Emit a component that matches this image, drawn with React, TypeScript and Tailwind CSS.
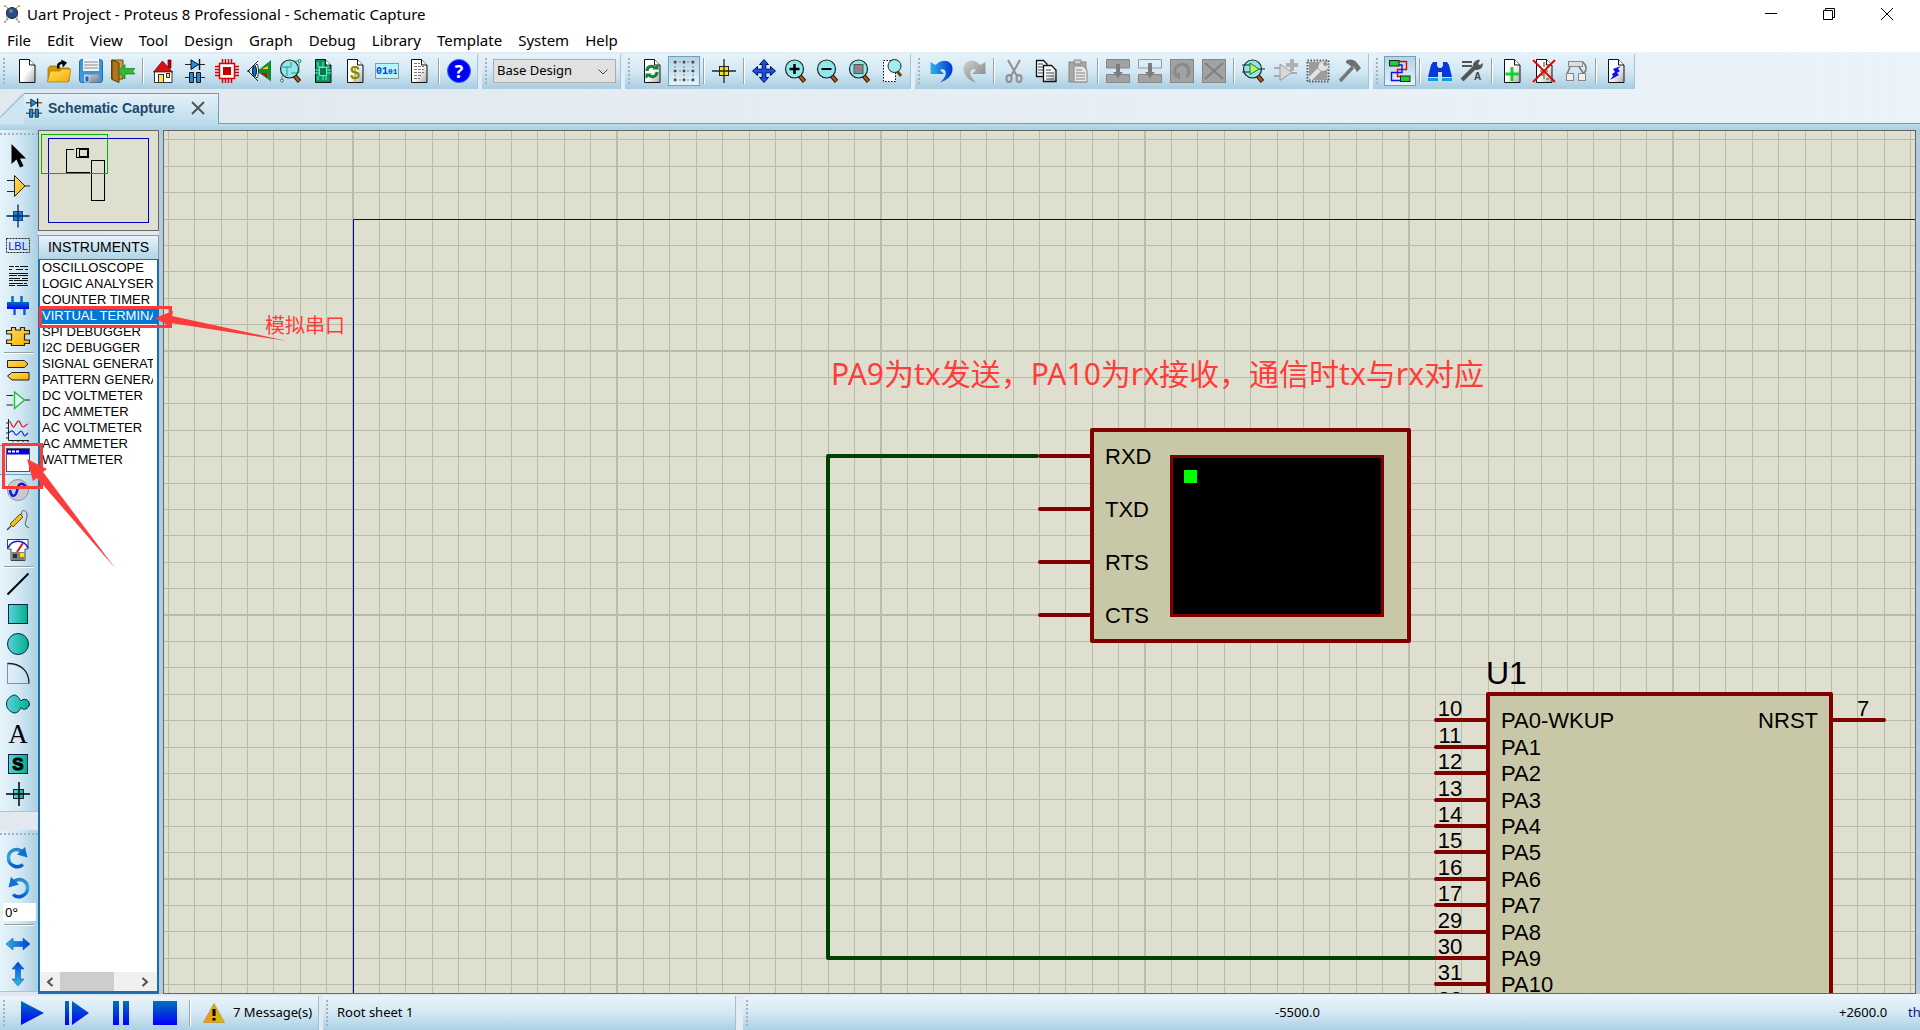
import { Fragment, useState } from 'react';
import type { ReactNode } from 'react';
import clsx from 'clsx';

const MENUS = ['File', 'Edit', 'View', 'Tool', 'Design', 'Graph', 'Debug', 'Library', 'Template', 'System', 'Help'];

const INSTRUMENTS = [
  'OSCILLOSCOPE',
  'LOGIC ANALYSER',
  'COUNTER TIMER',
  'VIRTUAL TERMINAL',
  'SPI DEBUGGER',
  'I2C DEBUGGER',
  'SIGNAL GENERATOR',
  'PATTERN GENERATOR',
  'DC VOLTMETER',
  'DC AMMETER',
  'AC VOLTMETER',
  'AC AMMETER',
  'WATTMETER',
];

// Sheet coordinates, origin at the top left corner of the sheet border
const TERMINAL_PINS = [
  { name: 'RXD', y: 237 },
  { name: 'TXD', y: 290 },
  { name: 'RTS', y: 343 },
  { name: 'CTS', y: 396 },
];

const CHIP_PINS = [
  { num: '10', name: 'PA0-WKUP', y: 501 },
  { num: '11', name: 'PA1', y: 528 },
  { num: '12', name: 'PA2', y: 554 },
  { num: '13', name: 'PA3', y: 581 },
  { num: '14', name: 'PA4', y: 607 },
  { num: '15', name: 'PA5', y: 633 },
  { num: '16', name: 'PA6', y: 660 },
  { num: '17', name: 'PA7', y: 686 },
  { num: '29', name: 'PA8', y: 713 },
  { num: '30', name: 'PA9', y: 739 },
  { num: '31', name: 'PA10', y: 765 },
  { num: '32', name: 'PA11', y: 792 },
];

const GRID = [26, 52, 79, 105, 132, 158, 184, 211, 237];

function Icon({ children }: { children: ReactNode }) {
  return (
    <svg viewBox="0 0 24 24" className="w-6 h-6 shrink-0" fill="none" aria-hidden="true">
      {children}
    </svg>
  );
}

// Gradients shared by all icons
function IconDefs() {
  return (
    <svg className="absolute w-0 h-0" aria-hidden="true">
      <defs>
        <linearGradient id="blueV" x1="0" y1="0" x2="0" y2="1">
          <stop offset="0" stopColor="#0072b8" />
          <stop offset="1" stopColor="#0000ff" />
        </linearGradient>
        <linearGradient id="blueH" x1="0" y1="0" x2="1" y2="0">
          <stop offset="0" stopColor="#2fb4e4" />
          <stop offset="1" stopColor="#0038d8" />
        </linearGradient>
        <linearGradient id="cyanV" x1="0" y1="0" x2="0" y2="1">
          <stop offset="0" stopColor="#0040e0" />
          <stop offset="1" stopColor="#30c0ea" />
        </linearGradient>
        <linearGradient id="turn" x1="0" y1="0" x2="0" y2="1">
          <stop offset="0" stopColor="#2a86c8" />
          <stop offset="0.5" stopColor="#30a8e4" />
          <stop offset="1" stopColor="#0058d8" />
        </linearGradient>
        <linearGradient id="teal" x1="0" y1="0" x2="1" y2="0">
          <stop offset="0" stopColor="#5ad2dc" />
          <stop offset="1" stopColor="#00b08c" />
        </linearGradient>
        <linearGradient id="gold" x1="0" y1="0" x2="1" y2="1">
          <stop offset="0" stopColor="#ffe060" />
          <stop offset="1" stopColor="#f8ac00" />
        </linearGradient>
        <linearGradient id="paper" x1="0" y1="0" x2="1" y2="1">
          <stop offset="0.5" stopColor="#ffffff" />
          <stop offset="1" stopColor="#a8a8a8" />
        </linearGradient>
        <linearGradient id="grey" x1="0" y1="0" x2="1" y2="1">
          <stop offset="0" stopColor="#cfcfcf" />
          <stop offset="1" stopColor="#808080" />
        </linearGradient>
        <linearGradient id="warn" x1="0" y1="0" x2="1" y2="0">
          <stop offset="0" stopColor="#ff8a1c" />
          <stop offset="1" stopColor="#c8c800" />
        </linearGradient>
      </defs>
    </svg>
  );
}

function Page({ fill = 'url(#paper)' }: { fill?: string }) {
  return (
    <>
      <path d="M4.500 .5H14.500L20 6V23.500H4.500Z" fill={fill} stroke="#111" />
      <path d="M14.500 .5V6H20" fill="#fff" stroke="#111" />
    </>
  );
}

function Lens() {
  return (
    <>
      <path d="M15.500 16.500L20.500 22.500" stroke="#301800" strokeWidth="4.500" />
      <path d="M16 17L20 22" stroke="#a86010" strokeWidth="2.500" />
      <circle cx="10.500" cy="10" r="9" fill="#8ee8ec" stroke="#222" strokeWidth="1.200" />
    </>
  );
}

function DiodeCap() {
  return (
    <>
      <path d="M2 5.500H22M2 18.500H22" stroke="#222" strokeWidth="1.200" />
      <path d="M8 .8L15.500 5.500L8 10.500Z" fill="#1a8fe8" stroke="#111" />
      <path d="M16.500 0V11" stroke="#111" strokeWidth="1.500" />
      <path d="M6.500 13.500H10.500V23.500H6.500ZM13.500 13.500H17.500V23.500H13.500Z" fill="#1a8fe8" stroke="#111" />
    </>
  );
}

const newFile = <Page />;

const openFile = (
  <>
    <path d="M1 22V9.500L3 7H9L11 9H22V22Z" fill="#d99a00" stroke="#8a6200" strokeWidth=".7" />
    <path d="M.5 23L3 12H13L15 10H24L21.500 23Z" fill="url(#gold)" stroke="#a87400" strokeWidth=".7" />
    <path d="M11.500 9.500C10 4.500 13.500 3.500 16.500 4" stroke="#000" strokeWidth="2.500" />
    <path d="M14 .5L20 3.500L16 8.500Z" fill="#000" />
  </>
);

const saveFile = (
  <>
    <rect x=".5" y=".5" width="23" height="23" rx="2.500" fill="#3c96dc" stroke="#1f6eb4" />
    <path d="M4 0H20V12H4Z" fill="#f4f4f4" />
    <path d="M5 3H19M5 6H19M5 9H19" stroke="#888" />
    <path d="M5 15.500H20V23.500H5Z" fill="url(#grey)" />
    <path d="M6 17H10V23H6Z" fill="#1d5ed0" stroke="#fff" strokeWidth=".7" />
  </>
);

const exitApp = (
  <>
    <path d="M.5 1H12V20H.5Z" fill="#caa040" stroke="#684a00" />
    <path d="M1 1L8 4V23.500L1 20.500Z" fill="#ae7420" stroke="#5a3c00" />
    <path d="M7 12.500L14 5.500V9.500H24L21.500 12L24 15H14V20Z" fill="#30bc30" stroke="#0b7a18" strokeWidth=".7" />
  </>
);

const home = (
  <>
    <path d="M17 1H20V9H17Z" fill="#c00" stroke="#500" strokeWidth=".7" />
    <path d="M3.500 12V23.500H21V12" fill="#fff" stroke="#333" />
    <path d="M2.500 13L11.500 2L21.500 13Z" fill="#d41414" stroke="#500" strokeWidth=".7" />
    <rect x="7.500" y="15.500" width="5" height="8" fill="#ffe640" stroke="#333" />
    <rect x="15.500" y="14.500" width="3" height="4" fill="#ffe640" stroke="#333" />
  </>
);

const pcb = (
  <>
    <path
      d="M7.500 0V24M10.500 0V24M13.500 0V24M16.500 0V24M0 7.500H24M0 10.500H24M0 13.500H24M0 16.500H24"
      stroke="#d80000"
      strokeWidth="1.500"
    />
    <rect x="4.500" y="4.500" width="15" height="15" fill="#fff" stroke="#d80000" strokeWidth="1.500" />
    <rect x="8" y="8" width="8" height="8" fill="#c40000" />
  </>
);

const viewer3d = (
  <>
    <path d="M11 2L1 12L11 22M0 12H3" stroke="#222" />
    <path d="M10 5C5 9 5 15 10 19C12 15 12 9 10 5Z" fill="#fff" stroke="#222" />
    <ellipse cx="7.500" cy="12" rx="2" ry="5" fill="#0e78c8" stroke="#003" />
    <path d="M12 11L24 1.500V22L12 13.500Z" fill="#129030" stroke="#064" strokeWidth=".5" />
    <path d="M15 10L21 7V10H16Z" fill="#ffd800" />
    <path d="M14 14L20 14V19Z" fill="#e00000" />
  </>
);

const gerber = (
  <>
    <Lens />
    <path d="M3 8H12V3M8 8V17M12 14H18M14 2H20M20 6V2M20 6V14M3 17V20" stroke="#17866c" strokeWidth=".8" />
    <circle cx="20.500" cy="2" r="1.500" fill="#c8f0e4" stroke="#17866c" />
    <circle cx="3" cy="21.500" r="1.500" fill="#c8f0e4" stroke="#17866c" />
  </>
);

const designExplorer = (
  <>
    <Page fill="#0c9460" />
    <path d="M7 3V8H12V3M7 21V17M12 21V17M15 17V21M4 11H8M16 11H20M17 5V9M4 14H8M16 14H20" stroke="#5ff0c8" />
    <rect x="8.500" y="8.500" width="7" height="8" fill="#087848" stroke="#5ff0c8" />
  </>
);

const bom = (
  <>
    <Page />
    <text x="12" y="20" textAnchor="middle" fontSize="18" fontWeight="700" fill="#8c8c00" fontFamily="Liberation Sans, sans-serif">
      $
    </text>
  </>
);

const source = (
  <>
    <rect x=".5" y="4.500" width="23" height="15" fill="#b4f8fc" stroke="#8a9aa0" />
    <text x="1" y="15" fontSize="10" fontWeight="700" fill="#1038d8" fontFamily="Liberation Mono, monospace">
      01
    </text>
    <text x="13" y="15" fontSize="8" fontWeight="700" fill="#1038d8" fontFamily="Liberation Mono, monospace">
      01
    </text>
  </>
);

const report = (
  <>
    <Page />
    <path d="M7 4.500H13M7 7.500H17M7 10.500H17M7 13.500H17M7 16.500H15M7 19.500H13" stroke="#777" strokeDasharray="3 1" />
  </>
);

const help = (
  <>
    <circle cx="12" cy="12" r="11.500" fill="#0000f4" stroke="#2a68ff" />
    <text x="12" y="18.500" textAnchor="middle" fontSize="18" fontWeight="700" fill="#fff" fontFamily="Open Sans, sans-serif">
      ?
    </text>
  </>
);

const redraw = (
  <>
    <Page />
    <path d="M7 12C7 7 13 6 15 9" stroke="#168040" strokeWidth="3" />
    <path d="M12 10.500H18.500V5Z" fill="#168040" />
    <path d="M17 13C17 18 11 19 9 16" stroke="#168040" strokeWidth="3" />
    <path d="M12 14.500H5.500V20Z" fill="#168040" />
  </>
);

const grid = (
  <>
    <path d="M3 3H21M3 12H21M3 21H21M3 3V21M12 3V21M21 3V21" stroke="#667" strokeDasharray="2 2" strokeWidth=".8" />
    {[3, 12, 21].map((y) => (
      <path
        key={y}
        d={`M1.500 ${y}H4.500M10.500 ${y}H13.500M19.500 ${y}H22.500M3 ${y - 1.5}V${y + 1.5}M12 ${y - 1.5}V${y + 1.5}M21 ${y - 1.5}V${y + 1.5}`}
        stroke="#333"
      />
    ))}
  </>
);

const origin = (
  <>
    <rect x="7.500" y="7.500" width="9" height="9" fill="#ffe600" stroke="#222" />
    <path d="M12 0V24M0 12H24" stroke="#222" strokeWidth="1.300" />
  </>
);

const pan = (
  <path
    d="M12 .5L16.500 5.500H13.800V10.200H18.500V7.500L23.500 12L18.500 16.500V13.800H13.800V18.500H16.500L12 23.500L7.500 18.500H10.200V13.800H5.500V16.500L.5 12L5.500 7.500V10.200H10.200V5.500H7.500Z"
    fill="#1450f0"
    stroke="#001040"
  />
);

const zoomIn = (
  <>
    <Lens />
    <path d="M10.500 5V15M5.500 10H15.500" stroke="#000" strokeWidth="2.500" />
  </>
);

const zoomOut = (
  <>
    <Lens />
    <path d="M5.500 10H15.500" stroke="#000" strokeWidth="2" />
  </>
);

const zoomAll = (
  <>
    <Lens />
    <rect x="6" y="5.500" width="9" height="9" fill="#888" stroke="#555" />
  </>
);

const zoomArea = (
  <>
    <rect x="3.500" y="1.500" width="12" height="21" fill="#fff" stroke="#000" strokeDasharray="1.500 1.500" />
    <path d="M17 12L21 17" stroke="#70400c" strokeWidth="3" />
    <circle cx="14.500" cy="7" r="6.500" fill="#a0ecf0" stroke="#222" />
  </>
);

const undo = (
  <path d="M.5 3L5.500 6C13 -2 23 2 22.500 10C22.500 16 18 21 10 23.500C15 19 17 15 15 11.500C13.500 9.500 11 10 10 11L14 15H.5Z" fill="url(#blueH)" />
);

const redo = (
  <path d="M23.500 3L18.500 6C11 -2 1 2 1.500 10C1.500 16 6 21 14 23.500C9 19 7 15 9 11.500C10.500 9.500 13 10 14 11L10 15H23.500Z" fill="url(#grey)" />
);

const cut = (
  <>
    <path d="M6 1L15 17M18 1L9 17" stroke="#8f8f8f" strokeWidth="2" />
    <ellipse cx="7" cy="19.500" rx="2.500" ry="3.500" stroke="#8f8f8f" strokeWidth="2" />
    <ellipse cx="17" cy="19.500" rx="2.500" ry="3.500" stroke="#8f8f8f" strokeWidth="2" />
  </>
);

const copy = (
  <>
    <path d="M2.500 1.500H9.500L13 5V17.500H2.500Z" fill="#fff" stroke="#111" strokeWidth="1.300" />
    <path d="M4 5H9M4 8H10M4 11H10M4 14H10" stroke="#345" />
    <path d="M9.500 6.500H17.500L22 11V22.500H9.500Z" fill="url(#paper)" stroke="#111" strokeWidth="1.300" />
    <path d="M12 11H17M12 14H20M12 17H20M12 20H20" stroke="#345" />
  </>
);

const paste = (
  <>
    <rect x="3" y="3" width="17" height="20" fill="#a8a8a8" stroke="#888" />
    <path d="M8 1H15V5H8Z" fill="#ccc" stroke="#888" />
    <path d="M8 7H17L21 11V23H8Z" fill="#e4e4e4" stroke="#888" />
    <path d="M10 11H16M10 14H19M10 17H19M10 20H19" stroke="#888" />
  </>
);

const blockCopy = (
  <>
    <path d="M.5 .5H23.500V9H.5ZM.5 15.500H23.500V23.500H.5Z" fill="#a2a2a2" stroke="#868686" />
    <path d="M10 5H14V13H17L12 19L7 13H10Z" fill="#7c7c7c" />
  </>
);

const blockMove = (
  <>
    <path d="M.5 .5H23.500V9H.5Z" stroke="#9a9a9a" />
    <path d="M.5 15.500H23.500V23.500H.5Z" fill="#a2a2a2" stroke="#868686" />
    <path d="M10 4H14V13H17L12 19L7 13H10Z" fill="#7c7c7c" />
  </>
);

const blockRotate = (
  <>
    <rect x=".5" y=".5" width="23" height="23" fill="#a2a2a2" stroke="#868686" />
    <path d="M7 18C1 10 9 3 15 6C20 8 20 15 16 18" stroke="#8a8a8a" strokeWidth="3" />
    <path d="M2 14H10V21Z" fill="#8a8a8a" />
  </>
);

const blockDelete = (
  <>
    <rect x=".5" y=".5" width="23" height="23" fill="#a2a2a2" stroke="#868686" />
    <path d="M3 4L21 20M21 4L3 20" stroke="#808080" strokeWidth="2" />
  </>
);

const pickPart = (
  <>
    <Lens />
    <path d="M0 6H8M0 13H8M16 10H23" stroke="#222" />
    <path d="M8 4L17 10L8 15.500Z" fill="#c8f060" stroke="#0a7a30" />
  </>
);

const makeDevice = (
  <>
    <path d="M0 9H6M0 17H6M17 14H23" stroke="#999" strokeWidth="1.500" />
    <path d="M6 5L18 13.500L6 21.500Z" fill="#d8d8d8" stroke="#999" />
    <path d="M18 0V12M12 6H24" stroke="#b0b0b0" strokeWidth="4" />
  </>
);

const packaging = (
  <>
    <rect x="3" y="3" width="18" height="18" fill="#9c9c9c" />
    <rect x="1.500" y="1.500" width="21" height="21" stroke="#555" strokeWidth="2" strokeDasharray="1.500 1.500" />
    <path d="M4 20L15 9" stroke="#e4e4e4" strokeWidth="4.500" />
    <path d="M12 10C11 4 16 1 19 2L17 5L19 7L23 5C23 10 20 13 15 12Z" fill="#e4e4e4" stroke="#888" strokeWidth=".6" />
  </>
);

const decompose = (
  <>
    <path d="M2 22L15 8" stroke="#777" strokeWidth="3.500" />
    <path d="M8 2C12 -1 17 1 19 4L23 9L19 13L16 8C13 8 11 5 8 4Z" fill="#707070" />
  </>
);

const autorouter = (
  <>
    <path d="M11 2.500H18.500V10.500H9.500V17.500H14" stroke="#e80000" strokeWidth="1.400" />
    <path d="M11 6H14V13.500H3.500V21.500H12" stroke="#1010e8" strokeWidth="1.400" />
    <rect x="1.500" y="1.500" width="9.500" height="5.500" fill="#20d030" stroke="#222" />
    <rect x="12.500" y="17" width="9.500" height="5.500" fill="#20d030" stroke="#222" />
  </>
);

const search = (
  <>
    <path d="M3 6L5 3H9V7L11 9H13L15 7V3H19L21 6L24 18H14V13H10V18H0Z" fill="#0838d8" />
    <path d="M0 19H10V22H0ZM14 19H24V22H14Z" fill="#10a0d8" />
  </>
);

const propertyTool = (
  <>
    <path d="M2 3H12M2 7H12" stroke="#555" strokeWidth="2" />
    <path d="M2 21L15 8" stroke="#555" strokeWidth="4" />
    <path d="M13 9C12 4 16 0 20 1L18 5L20 6L23 4C23 9 20 11 16 11Z" fill="#555" />
    <text x="14" y="21" fontSize="10" fontWeight="700" fill="#444" fontFamily="Liberation Sans, sans-serif">
      A
    </text>
  </>
);

const newSheet = (
  <>
    <Page />
    <path d="M12 8V22M5.500 15H19" stroke="#18d028" strokeWidth="3" />
  </>
);

const removeSheet = (
  <>
    <Page />
    <path d="M12 3V8M8 12H16M12 12V20M7 16H12M14 20H17" stroke="#6a8a50" strokeWidth="1.500" />
    <path d="M1 1L23 23M23 1L1 23" stroke="#e80000" strokeWidth="1.800" />
  </>
);

const sheetTree = (
  <>
    <path d="M6 8L3 15M15 8L20 15M19 3C23 7 23 11 20 14" stroke="#777" strokeWidth="1.500" />
    <rect x="4.500" y="2.500" width="14" height="5" fill="#ddd" stroke="#888" />
    <rect x="2.500" y="14.500" width="7" height="7" fill="#eee" stroke="#888" />
    <rect x="14.500" y="14.500" width="7" height="7" fill="#eee" stroke="#888" />
  </>
);

const erc = (
  <>
    <Page />
    <path d="M17 7L9 10L11 13L8 15L9 17L6 21L15 16L13 14L16 12L14 10Z" fill="#1010f0" />
  </>
);

const selection = <path d="M5.500 0V20L10.500 15.500L14 23.500L17.500 22L14 14.500H20Z" fill="#000" />;

const component = (
  <>
    <path d="M1 6.500H8M1 17.500H8M18 12H24" stroke="#222" />
    <path d="M8.500 1.500L19 12L8.500 22.500Z" fill="url(#gold)" stroke="#222" />
  </>
);

const junction = (
  <>
    <rect x="7.500" y="7.500" width="9" height="9" fill="#1080e0" stroke="#0a4ca0" />
    <path d="M12 .5V23.500M.5 12H23.500" stroke="#124" strokeWidth="1.300" />
  </>
);

const wireLabel = (
  <>
    <rect x=".5" y="4.500" width="23" height="14" stroke="#222" strokeDasharray="2 1" />
    <text x="12" y="15.500" textAnchor="middle" fontSize="11" fill="#1414c8" fontFamily="Liberation Sans, sans-serif">
      LBL
    </text>
  </>
);

const textScript = (
  <>
    <path d="M3 2.500H8M9 2.500H13M14 2.500H22M3 5.500H6M10 5.500H17M19 5.500H22" stroke="#111" />
    <path d="M3 9.500H22M3 11.500H11M12 11.500H22M3 14.500H14M16 14.500H22" stroke="#111" />
    <path d="M3 16.500H7M8 16.500H22M3 19.500H17M18 19.500H21M3 21.500H9M11 21.500H22" stroke="#111" />
  </>
);

const bus = (
  <>
    <path d="M6.500 2V8M15.500 2V8M8.500 14V21M18.500 14V21" stroke="#1060e0" strokeWidth="2.500" />
    <rect x="1" y="8" width="22" height="7" fill="url(#blueV)" />
  </>
);

const subcircuit = (
  <path
    d="M5.500 3.500H9.500V6H14.500V3.500H18.500V6.500H23.500V10H18.500V16H23.500V19.500H18.500V21.500H5.500V19.500H.5V16H5.500V10H.5V6.500H5.500Z"
    fill="url(#gold)"
    stroke="#222"
    strokeWidth="1.200"
  />
);

const terminals = (
  <>
    <path d="M1.500 2.500H18.500L22 6L18.500 9.500H1.500Z" fill="url(#gold)" stroke="#222" />
    <path d="M23 14.500H6L1.500 18L6 22H23Z" fill="url(#gold)" stroke="#222" />
  </>
);

const devicePins = (
  <>
    <path d="M.5 7.500H7M.5 17H7M19 12H24" stroke="#222" />
    <path d="M8.500 4L18.500 12L8.500 20.500Z" fill="#e0f4f4" stroke="#18c028" strokeWidth="1.300" />
  </>
);

const graphMode = (
  <>
    <path d="M2.500 1V22.500H23M0 5H2M0 10H2M0 15H2M0 20H2M7 22V24M12 22V24M17 22V24M22 22V24" stroke="#222" />
    <path d="M3 3C6 5 6 10 8 9C10 7 11 2 13 3C15 5 15 9 17 9C19 9 20 6 22 6" stroke="#e02020" strokeWidth="1.200" />
    <path d="M3 15C5 12 7 12 9 16C11 19 13 14 15 13C17 13 17 18 19 18L22 15" stroke="#1030e0" strokeWidth="1.200" />
  </>
);

const instruments = (
  <>
    <rect x=".5" y=".5" width="23" height="23" fill="#fff" stroke="#555" />
    <rect x="1" y="1" width="22" height="5.500" fill="#0000e0" />
    <path d="M2 3.500H5M6 3.500H9M10 3.500H13" stroke="#fff" strokeWidth="2" />
  </>
);

const generator = (
  <>
    <circle cx="12" cy="12" r="10.500" fill="#c8ccd0" stroke="#8c9298" />
    <path d="M4 12C5 19 9 20 11 13C12 6 16 3 20 9" stroke="#0818e8" strokeWidth="2.500" />
  </>
);

const probe = (
  <>
    <path d="M1 22L5 18" stroke="#444" strokeWidth="1.500" />
    <path d="M4 16L14 6L17 9L7 19Z" fill="#f0c020" stroke="#705000" />
    <path d="M16 7C14 1 21 1 21 7C21 13 18 14 20 18L23 20" stroke="#555" />
  </>
);

const virtualMeter = (
  <>
    <path d="M1.500 1.500H22V11H19V22.500H5V11H1.500Z" fill="#fff" stroke="#444" />
    <path d="M2 10C6 1 18 1 22 10" stroke="#1818e8" strokeWidth="1.500" />
    <path d="M11 14L17 5" stroke="#e00000" strokeWidth="1.800" />
    <path d="M5.500 14H18.500V22H5.500Z" fill="#808080" />
    <path d="M7 16H11V20H7Z" fill="#303030" />
    <path d="M14 15H18V19H14Z" fill="#ffe000" />
  </>
);

const line2d = <path d="M1.500 22.500L22.500 1.500" stroke="#000" strokeWidth="2" />;
const box2d = <rect x="2.500" y="2.500" width="19" height="19" fill="url(#teal)" stroke="#124" />;
const circle2d = <circle cx="12" cy="12" r="10.500" fill="url(#teal)" stroke="#124" />;

const arc2d = (
  <>
    <path d="M1.500 1.500V21.500H23" stroke="#2020e0" strokeDasharray="1 1" />
    <path d="M1.500 1.500C15 1.500 23 9 23 21.500" stroke="#222" strokeWidth="1.300" />
  </>
);

const path2d = (
  <path
    d="M8 3C12 3 14 8 15 9C17 6 23 7 23.500 12C23 17 17 19 15 15.500C13 19 12 21 8 21C-2 18 -2 6 8 3Z"
    fill="url(#teal)"
    stroke="#124"
  />
);

const text2d = (
  <text x="12" y="21" textAnchor="middle" fontSize="27" fill="#000" fontFamily="Liberation Serif, serif">
    A
  </text>
);

const symbol2d = (
  <>
    <rect x="2.500" y="2.500" width="19" height="19" fill="url(#teal)" stroke="#124" />
    <text x="12" y="18" textAnchor="middle" fontSize="17" fontWeight="900" fill="#000" stroke="#000" fontFamily="Liberation Sans, sans-serif">
      S
    </text>
  </>
);

const marker2d = (
  <>
    <rect x="7.500" y="7.500" width="10" height="9" fill="url(#teal)" stroke="#124" />
    <path d="M13 0V24M0 12H24" stroke="#000" strokeWidth="1.500" />
  </>
);

const rotateCw = (
  <>
    <path d="M16 5.500C10 1 2 5 2.500 12.500C3 20 12 23 17 18.500" stroke="url(#turn)" strokeWidth="3.500" />
    <path d="M19 1L21.500 11.500L11 8.500Z" fill="#1070d0" />
  </>
);

const rotateCcw = (
  <>
    <path d="M8 5.500C14 1 22 5 21.500 12.500C21 20 12 23 7 18.500" stroke="url(#turn)" strokeWidth="3.500" />
    <path d="M5 1L2.500 11.500L13 8.500Z" fill="#1070d0" />
  </>
);

const flipH = <path d="M0 12L7 6V9.500H17V6L24 12L17 18V14.500H7V18Z" fill="url(#blueH)" stroke="#1a5a98" strokeWidth=".6" />;
const flipV = <path d="M12 0L18 7H14.500V17H18L12 24L6 17H9.500V7H6Z" fill="url(#cyanV)" stroke="#1a5a98" strokeWidth=".6" />;

type Tool = { label: string; art: ReactNode; active?: boolean } | 'sep';

const FILE_TOOLS: Tool[] = [
  { label: 'New Project', art: newFile },
  { label: 'Open Project', art: openFile },
  { label: 'Save Project', art: saveFile },
  { label: 'Close Project', art: exitApp },
  'sep',
  { label: 'Home Page', art: home },
  { label: 'Schematic Capture', art: <DiodeCap /> },
  { label: 'PCB Layout', art: pcb },
  { label: '3D Visualizer', art: viewer3d },
  { label: 'Gerber Viewer', art: gerber },
  { label: 'Design Explorer', art: designExplorer },
  { label: 'Bill of Materials', art: bom },
  { label: 'Source Code', art: source },
  { label: 'Project Notes', art: report },
  'sep',
  { label: 'Help', art: help },
];

const VIEW_TOOLS: Tool[] = [
  { label: 'Redraw', art: redraw },
  { label: 'Toggle Grid', art: grid, active: true },
  'sep',
  { label: 'Toggle Origin', art: origin },
  'sep',
  { label: 'Center At Cursor', art: pan },
  { label: 'Zoom In', art: zoomIn },
  { label: 'Zoom Out', art: zoomOut },
  { label: 'Zoom To View Entire Sheet', art: zoomAll },
  { label: 'Zoom To Area', art: zoomArea },
];

const EDIT_TOOLS: Tool[] = [
  { label: 'Undo', art: undo },
  { label: 'Redo', art: redo },
  'sep',
  { label: 'Cut', art: cut },
  { label: 'Copy', art: copy },
  { label: 'Paste', art: paste },
  'sep',
  { label: 'Block Copy', art: blockCopy },
  { label: 'Block Move', art: blockMove },
  { label: 'Block Rotate', art: blockRotate },
  { label: 'Block Delete', art: blockDelete },
  'sep',
  { label: 'Pick Parts', art: pickPart },
  { label: 'Make Device', art: makeDevice },
  { label: 'Packaging Tool', art: packaging },
  { label: 'Decompose', art: decompose },
];

const DESIGN_TOOLS: Tool[] = [
  { label: 'Wire Autorouter', art: autorouter, active: true },
  'sep',
  { label: 'Search & Tag', art: search },
  { label: 'Property Assignment Tool', art: propertyTool },
  'sep',
  { label: 'New Root Sheet', art: newSheet },
  { label: 'Remove Sheet', art: removeSheet },
  { label: 'Exit to Parent Sheet', art: sheetTree },
  'sep',
  { label: 'Electrical Rules Check', art: erc },
];

const MODE_TOOLS: Tool[] = [
  { label: 'Selection Mode', art: selection },
  { label: 'Component Mode', art: component },
  { label: 'Junction Dot Mode', art: junction },
  { label: 'Wire Label Mode', art: wireLabel },
  { label: 'Text Script Mode', art: textScript },
  { label: 'Buses Mode', art: bus },
  { label: 'Subcircuit Mode', art: subcircuit },
  'sep',
  { label: 'Terminals Mode', art: terminals },
  { label: 'Device Pins Mode', art: devicePins },
  { label: 'Graph Mode', art: graphMode },
  { label: 'Virtual Instruments Mode', art: instruments, active: true },
  { label: 'Generator Mode', art: generator },
  { label: 'Probe Mode', art: probe },
  { label: 'Meter Mode', art: virtualMeter },
  'sep',
  { label: '2D Graphics Line', art: line2d },
  { label: '2D Graphics Box', art: box2d },
  { label: '2D Graphics Circle', art: circle2d },
  { label: '2D Graphics Arc', art: arc2d },
  { label: '2D Graphics Path', art: path2d },
  { label: '2D Graphics Text', art: text2d },
  { label: '2D Graphics Symbol', art: symbol2d },
  { label: '2D Graphics Marker', art: marker2d },
];

function Grip() {
  return <div className="self-stretch ml-[3px] w-2 my-1 border-l-2 border-dotted border-[#9fb2bf]" />;
}

function ToolGroup({ tools }: { tools: Tool[] }) {
  return (
    <div className="flex items-center h-[35px] pb-px pr-0.5 border-r border-[#a4c6d8] bg-linear-to-b from-[#e6f3fa] via-[#d3e8f4] to-[#a9cde0]">
      <Grip />
      {tools.map((tool, i) =>
        tool === 'sep' ? (
          <div key={i} className="w-2 h-[26px] flex justify-center">
            <div className="w-0.5 bg-[#a0a0a0] border-r border-white" />
          </div>
        ) : (
          <button
            key={i}
            aria-label={tool.label}
            className={clsx(
              'w-8 h-[30px] flex items-center justify-center',
              tool.active && 'border border-[#6f9fba] bg-linear-to-b from-[#b4d3e4] to-[#e4f3fa]'
            )}
          >
            <Icon>{tool.art}</Icon>
          </button>
        )
      )}
    </div>
  );
}

function SideGrip() {
  return (
    <div className="h-[11px] pt-[3px]">
      <div className="border-t-2 border-dotted border-[#9fb2bf]" />
    </div>
  );
}

function SideSep() {
  return <div className="mx-1 my-px h-0.5 bg-[#9c9c9c] border-b border-white" />;
}

function SideButton({ label, active, children }: { label: string; active?: boolean; children: ReactNode }) {
  return (
    <button
      aria-label={label}
      className={clsx(
        'h-[30px] w-full pr-0.5 flex items-center justify-center',
        active && 'border-y border-[#6f9fba] bg-[#d6eaf4]'
      )}
    >
      <Icon>{children}</Icon>
    </button>
  );
}

function ModeBar() {
  return (
    <div className="w-[38px] shrink-0 flex flex-col pb-0.5">
      <div className="flex flex-col pb-0.5 border-b border-[#a4c6d8] bg-linear-to-r from-[#e6f4fb] via-[#d3e8f4] to-[#accfe1]">
        <SideGrip />
        {MODE_TOOLS.map((tool, i) =>
          tool === 'sep' ? (
            <SideSep key={i} />
          ) : (
            <SideButton key={i} label={tool.label} active={tool.active}>
              {tool.art}
            </SideButton>
          )
        )}
      </div>
      <div className="mt-[18px] pb-0.5 flex flex-col border-b border-[#a4c6d8] bg-linear-to-r from-[#e6f4fb] via-[#d3e8f4] to-[#accfe1]">
        <SideGrip />
        <div className="pt-0.5">
          <SideButton label="Rotate Clockwise">{rotateCw}</SideButton>
          <SideButton label="Rotate Anti-clockwise">{rotateCcw}</SideButton>
        </div>
        <input
          aria-label="Rotation angle"
          defaultValue="0°"
          className="ml-[3px] mr-0.5 h-[18px] min-w-0 bg-white pl-0.5 text-[13px] leading-4 text-black outline-none"
        />
        <div className="my-0.5">
          <SideSep />
        </div>
        <SideButton label="X-Mirror">{flipH}</SideButton>
        <SideButton label="Y-Mirror">{flipV}</SideButton>
      </div>
    </div>
  );
}

function Overview() {
  return (
    <svg className="block w-full h-[101px] border border-[#666] bg-[#dfdfcf]" fill="none" shapeRendering="crispEdges" aria-hidden="true">
      <rect x="9.500" y="7.500" width="100" height="84" stroke="#0000c0" />
      <path d="M35 18.500H27.500V41.500H51" stroke="#000" />
      <rect x="37.500" y="17.500" width="12" height="9" stroke="#000" />
      <rect x="40.500" y="18.500" width="8" height="7" stroke="#000" />
      <rect x="52.500" y="29.500" width="13" height="40" stroke="#000" />
      <rect x="2.500" y="3.500" width="66" height="39" stroke="#00b400" />
    </svg>
  );
}

function DevicePanel() {
  const [selected, setSelected] = useState('VIRTUAL TERMINAL');

  return (
    <div className="w-[121px] shrink-0 flex flex-col font-['Liberation_Sans',Arial,sans-serif]">
      <Overview />
      <div className="mt-1 h-6 shrink-0 border border-b-0 border-[#8a9aa4] bg-linear-to-b from-[#e8f4fb] to-[#b0d4e6] flex items-center justify-center text-[14px] text-black">
        INSTRUMENTS
      </div>
      <div className="flex-1 min-h-0 flex flex-col bg-white border-x-2 border-t border-b-[3px] border-[#1a70b8]">
        <ul role="listbox" aria-label="Instruments" className="flex-1 min-h-0 overflow-hidden">
          {INSTRUMENTS.map((name) => (
            <li
              key={name}
              role="option"
              aria-selected={name === selected}
              onClick={() => setSelected(name)}
              className={clsx(
                'h-4 pl-0.5 pr-1 text-[13px] leading-4 whitespace-nowrap overflow-hidden',
                name === selected ? 'bg-[#0078d7] text-white' : 'text-black'
              )}
            >
              <span className="block overflow-hidden">{name}</span>
            </li>
          ))}
        </ul>
        <div className="h-[19px] shrink-0 flex bg-[#f0f0f0]">
          <button aria-label="Scroll left" className="w-5 flex items-center justify-center">
            <svg viewBox="0 0 8 10" className="w-2 h-2.5" fill="none" stroke="#505050" strokeWidth="2">
              <path d="M6.500 1L2 5L6.500 9" />
            </svg>
          </button>
          <div className="flex-1">
            <div className="w-[54px] h-full bg-[#cdcdcd]" />
          </div>
          <button aria-label="Scroll right" className="w-6 flex items-center justify-center">
            <svg viewBox="0 0 8 10" className="w-2 h-2.5" fill="none" stroke="#505050" strokeWidth="2">
              <path d="M1.500 1L6 5L1.500 9" />
            </svg>
          </button>
        </div>
      </div>
    </div>
  );
}

function Schematic() {
  return (
    <div className="flex-1 min-w-0 border border-[#666] bg-[#dfdfcf] overflow-hidden">
      <svg className="block w-full h-full" fill="none" fontFamily="Liberation Sans, Arial, sans-serif" fontSize="22">
        <defs>
          <pattern id="grid" x="188" y="219" width="264" height="264" patternUnits="userSpaceOnUse">
            <path d="M1 0V264M0 1H264" stroke="#bbbbad" strokeWidth="2" />
            {GRID.map((p) => (
              <path key={p} d={`M${p + 1.5} 0V264M0 ${p + 1.5}H264`} stroke="#bbbbad" />
            ))}
          </pattern>
        </defs>
        <rect width="100%" height="100%" fill="url(#grid)" />

        <g transform="translate(189 88)">
          {/* Sheet border */}
          <path d="M.5 4000V.5H4000" stroke="#0000a0" />

          {/* Virtual terminal */}
          <path d="M685 237H475V739H1082" stroke="#004000" strokeWidth="4" strokeLinejoin="round" />
          <rect x="739" y="211" width="317" height="211" fill="#c8c8a9" stroke="#800000" strokeWidth="4" strokeLinejoin="round" />
          <rect x="818.500" y="237.500" width="211" height="159" fill="#000" stroke="#800000" strokeWidth="3" />
          <rect x="831" y="251" width="13" height="13" fill="#00ff00" />
          {TERMINAL_PINS.map((pin) => (
            <Fragment key={pin.name}>
              <path d={`M687 ${pin.y}H738`} stroke="#800000" strokeWidth="4" strokeLinecap="round" />
              <text x="752" y={pin.y + 8} fill="#000">
                {pin.name}
              </text>
            </Fragment>
          ))}

          {/* U1 */}
          <rect x="1135" y="475" width="343" height="900" fill="#c8c8a9" stroke="#800000" strokeWidth="4" strokeLinejoin="round" />
          <text x="1133" y="465" fontSize="32" fill="#000">
            U1
          </text>
          {CHIP_PINS.map((pin) => (
            <Fragment key={pin.num}>
              <path d={`M1083 ${pin.y}H1134`} stroke="#800000" strokeWidth="4" strokeLinecap="round" />
              <text x="1097" y={pin.y - 4} textAnchor="middle" fill="#000">
                {pin.num}
              </text>
              <text x="1148" y={pin.y + 8} fill="#000">
                {pin.name}
              </text>
            </Fragment>
          ))}
          <path d="M1479 501H1531" stroke="#800000" strokeWidth="4" strokeLinecap="round" />
          <text x="1465" y="509" textAnchor="end" fill="#000">
            NRST
          </text>
          <text x="1510" y="497" textAnchor="middle" fill="#000">
            7
          </text>

          {/* Notes */}
          <g fill="#ff3c3a" fontFamily="Noto Sans, Noto Sans CJK SC, sans-serif">
            <text x="-88" y="114" fontSize="20">
              模拟串口
            </text>
            <text x="478" y="166" fontSize="30">
              PA9为tx发送，PA10为rx接收，通信时tx与rx对应
            </text>
          </g>
        </g>
      </svg>
    </div>
  );
}

// Red boxes and arrows drawn over the side bars
function Callouts() {
  return (
    <svg className="absolute left-0 top-0 w-[300px] h-[450px] pointer-events-none" fill="none" aria-hidden="true">
      <rect x="40.500" y="177.500" width="130" height="19" stroke="#fb3c3a" strokeWidth="3" />
      <path d="M155 188L173 181L172 186L287 211L171 193L172 198Z" fill="#fb3c3a" />
      <rect x="3.500" y="314.500" width="38" height="43" stroke="#fb3c3a" strokeWidth="3" />
      <path d="M27 329L47 339L43 342L115 438L37 348L33 351Z" fill="#fb3c3a" />
    </svg>
  );
}

function StatusBar() {
  return (
    <footer className="mt-0.5 h-[34px] shrink-0 flex gap-1 text-[13px] text-black">
      <div className="w-[319px] flex items-center border-r border-[#9cc0d4] bg-linear-to-b from-[#eaf4fa] via-[#d3e8f4] to-[#acd0e3]">
        <Grip />
        <div className="flex items-center gap-5 pl-2.5">
          <button aria-label="Run the simulation">
            <Icon><path d="M0 0L23 12L0 24Z" fill="url(#blueV)" /></Icon>
          </button>
          <button aria-label="Step the simulation">
            <Icon><path d="M0 0H4V24H0ZM7 0L24 12L7 24Z" fill="url(#blueV)" /></Icon>
          </button>
          <button aria-label="Pause the simulation">
            <Icon><path d="M4 0H10V24H4ZM14 0H20V24H14Z" fill="url(#blueV)" /></Icon>
          </button>
          <button aria-label="Stop the simulation">
            <Icon><path d="M0 0H24V24H0Z" fill="url(#blueV)" /></Icon>
          </button>
        </div>
        <div className="ml-3 w-0.5 h-[26px] bg-[#a0a0a0] border-r border-white" />
        <button className="ml-3 flex items-center gap-2">
          <svg viewBox="0 0 22 20" className="w-[22px] h-5" aria-hidden="true">
            <path d="M11 .5L21.500 19.500H.5Z" fill="url(#warn)" stroke="#b07800" strokeWidth=".5" />
            <path d="M11 6V13M11 15V17.500" stroke="#000" strokeWidth="3" />
          </svg>
          7 Message(s)
        </button>
      </div>
      <div className="w-[413px] flex items-center border-r border-[#9cc0d4] bg-linear-to-b from-[#eaf4fa] via-[#d3e8f4] to-[#acd0e3]">
        <Grip />
        <span className="pl-[3px]">Root sheet 1</span>
      </div>
      <div className="ml-[3px] flex-1 flex items-center overflow-hidden bg-linear-to-b from-[#eaf4fa] via-[#d3e8f4] to-[#acd0e3]">
        <Grip />
        <span className="ml-auto w-[564px]">-5500.0</span>
        <span className="w-[69px]">+2600.0</span>
        <span className="w-3 text-[#10107c]">th</span>
      </div>
    </footer>
  );
}

export default function App() {
  return (
    <div className="h-screen flex flex-col overflow-hidden bg-linear-to-r from-[#e1e8ef] to-[#ebf3fa] font-['Noto_Sans',sans-serif]">
      <IconDefs />

      {/* Title bar */}
      <header className="h-7 shrink-0 flex items-center bg-white pl-[3px] pr-1 text-[15px] text-black">
        <svg viewBox="0 0 18 20" className="w-[18px] h-5" fill="none" aria-hidden="true">
          <path d="M2 2C7 5 12 13 16 18M16 2C11 5 6 13 2 18M5 4C3 8 3 13 5 16M13 4C15 8 15 13 13 16" stroke="#8a8a8a" />
          <circle cx="9" cy="9" r="5.500" fill="#2c4c84" stroke="#182848" />
          <circle cx="8" cy="7" r="2" fill="#5c80b8" />
          <path d="M1 1H3V3H1ZM15 1H17V3H15ZM1 17H3V19H1ZM15 17H17V19H15Z" fill="#d8a850" />
        </svg>
        <span className="pl-1.5">Uart Project - Proteus 8 Professional - Schematic Capture</span>
        <div className="ml-auto flex">
          <button aria-label="Minimize" className="w-[58px] h-7 flex items-center justify-center">
            <svg viewBox="0 0 12 12" className="w-3 h-3" stroke="#000"><path d="M0 5.500H12" /></svg>
          </button>
          <button aria-label="Restore" className="w-[58px] h-7 flex items-center justify-center">
            <svg viewBox="0 0 12 12" className="w-3 h-3" fill="none" stroke="#000">
              <path d="M.5 2.500H9.500V11.500H.5ZM2.500 2.500V.5H11.500V9.500H9.500" />
            </svg>
          </button>
          <button aria-label="Close" className="w-[58px] h-7 flex items-center justify-center">
            <svg viewBox="0 0 12 12" className="w-3 h-3" stroke="#000"><path d="M0 0L12 12M12 0L0 12" /></svg>
          </button>
        </div>
      </header>

      {/* Menu */}
      <nav className="h-6 shrink-0 flex items-center gap-4 bg-white pl-[7px] text-[15px] text-black">
        {MENUS.map((menu) => (
          <button key={menu}>{menu}</button>
        ))}
      </nav>

      {/* Toolbars */}
      <div className="h-[41px] shrink-0 flex items-start gap-1 pt-0.5">
        <ToolGroup tools={FILE_TOOLS} />
        <div className="relative flex items-center h-[35px] pb-px pr-1 border-r border-[#a4c6d8] bg-linear-to-b from-[#e6f3fa] via-[#d3e8f4] to-[#a9cde0]">
          <Grip />
          <select
            aria-label="Design variant"
            className="appearance-none w-[123px] h-6 border border-[#adadad] bg-[#e1e1e1] pl-[3px] text-[13px] text-black"
          >
            <option>Base Design</option>
          </select>
          <svg viewBox="0 0 10 6" className="absolute right-3 top-[15px] w-2.5 h-1.5 pointer-events-none" fill="none" stroke="#444" aria-hidden="true">
            <path d="M.5 .5L5 5L9.500 .5" />
          </svg>
        </div>
        <ToolGroup tools={VIEW_TOOLS} />
        <ToolGroup tools={EDIT_TOOLS} />
        <ToolGroup tools={DESIGN_TOOLS} />
      </div>

      {/* Tabs */}
      <div className="h-[31px] shrink-0 flex">
        <svg viewBox="0 0 24 31" className="w-6 h-[31px]" aria-hidden="true">
          <path d="M0 24.500L24 .5V31H0Z" fill="#cfe5f2" />
          <path d="M0 24.500L24 .5" stroke="#6f9fba" />
        </svg>
        <div className="w-[195px] pb-0.5 flex items-center border-t border-r border-[#6f9fba] bg-linear-to-b from-[#e4f1f9] to-[#bcdcec] text-[14px] font-bold text-[#20486a] font-['Liberation_Sans',Arial,sans-serif]">
          <svg viewBox="2 0 20 24" className="ml-0.5 w-4 h-5" fill="none" aria-hidden="true">
            <DiodeCap />
          </svg>
          <span className="pl-1.5">Schematic Capture</span>
          <button aria-label="Close tab" className="ml-4">
            <svg viewBox="0 0 14 14" className="w-3.5 h-3.5" stroke="#555" strokeWidth="2" aria-hidden="true">
              <path d="M1 1L13 13M13 1L1 13" />
            </svg>
          </button>
        </div>
        <div className="flex-1 border-b border-[#6f9fba]" />
      </div>
      <div className="h-1.5 shrink-0 bg-linear-to-b from-[#bbdcec] to-[#abcfe2]" />

      {/* Workspace */}
      <main className="relative flex-1 min-h-0 flex overflow-hidden">
        <ModeBar />
        <DevicePanel />
        <div className="w-1 shrink-0 bg-[#b0cde0]" />
        <Schematic />
        <div className="w-1 shrink-0 bg-[#b0cde0]" />
        <Callouts />
      </main>

      <StatusBar />
    </div>
  );
}
